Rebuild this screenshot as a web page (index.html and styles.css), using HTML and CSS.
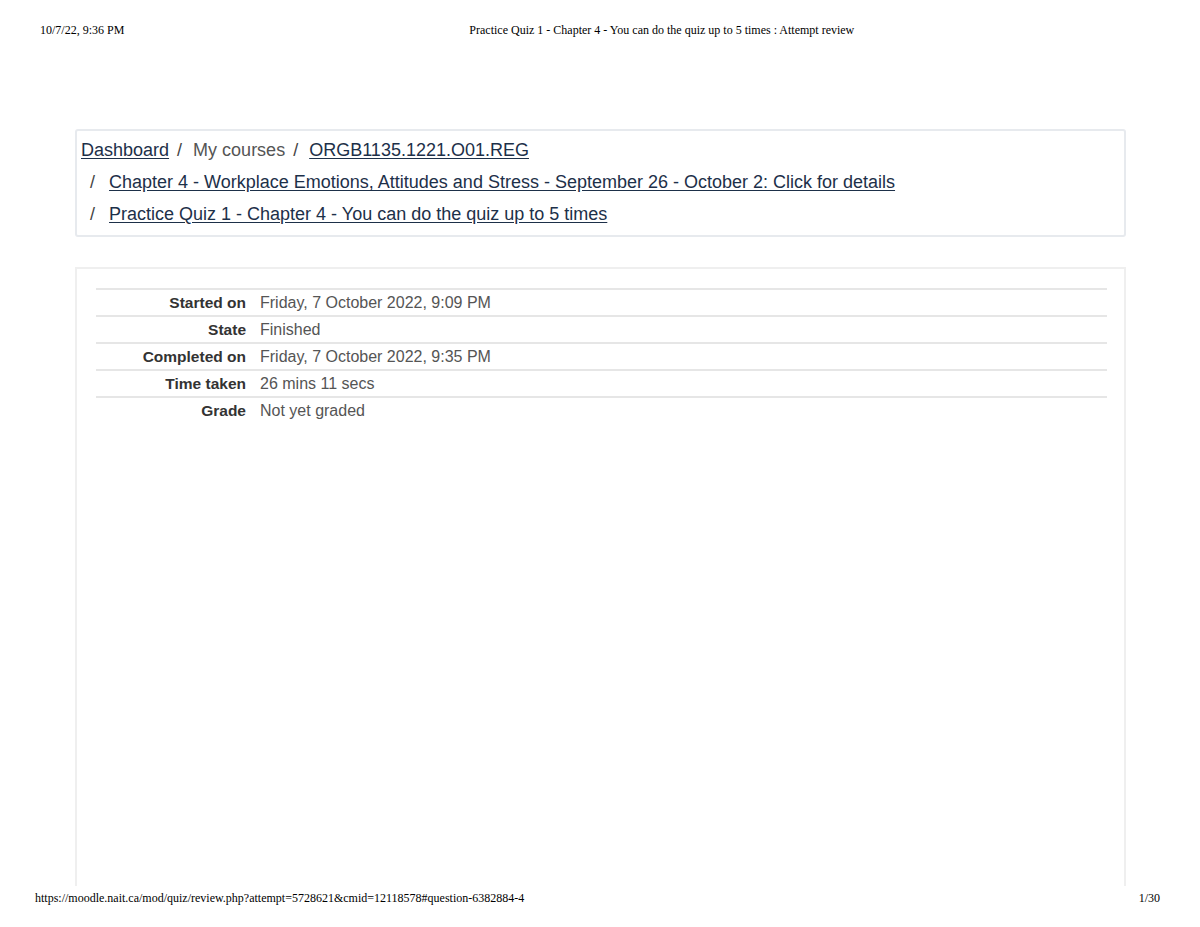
FILE: index.html
```html
<!DOCTYPE html>
<html lang="en">
<head>
    <meta charset="UTF-8">
    <meta name="viewport" content="width=device-width, initial-scale=1.0">
    <title>Practice Quiz 1 - Chapter 4 - You can do the quiz up to 5 times : Attempt review</title>
    <link rel="stylesheet" href="styles.css">
</head>
<body>
    <div class="print-header">
        <span class="print-date">10/7/22, 9:36 PM</span>
        <span class="print-title">Practice Quiz 1 - Chapter 4 - You can do the quiz up to 5 times : Attempt review</span>
    </div>

    <div class="page-body">
        <nav class="breadcrumb">
            <div class="crumb-line">
                <a href="#">Dashboard</a>
                <span class="sep">/</span>
                <span class="crumb-text">My courses</span>
                <span class="sep">/</span>
                <a href="#">ORGB1135.1221.O01.REG</a>
            </div>
            <div class="crumb-line indent">
                <span class="sep">/</span>
                <a href="#">Chapter 4 - Workplace Emotions, Attitudes and Stress - September 26 - October 2: Click for details</a>
            </div>
            <div class="crumb-line indent">
                <span class="sep">/</span>
                <a href="#">Practice Quiz 1 - Chapter 4 - You can do the quiz up to 5 times</a>
            </div>
        </nav>

        <div class="main-card">
            <table class="summary">
                <tr>
                    <th>Started on</th>
                    <td>Friday, 7 October 2022, 9:09 PM</td>
                </tr>
                <tr>
                    <th>State</th>
                    <td>Finished</td>
                </tr>
                <tr>
                    <th>Completed on</th>
                    <td>Friday, 7 October 2022, 9:35 PM</td>
                </tr>
                <tr>
                    <th>Time taken</th>
                    <td>26 mins 11 secs</td>
                </tr>
                <tr>
                    <th>Grade</th>
                    <td>Not yet graded</td>
                </tr>
            </table>
        </div>
    </div>

    <div class="print-footer">
        <span class="print-url">https://moodle.nait.ca/mod/quiz/review.php?attempt=5728621&amp;cmid=12118578#question-6382884-4</span>
        <span class="print-page">1/30</span>
    </div>
</body>
</html>
```

FILE: styles.css
```css
html, body {
    margin: 0;
    padding: 0;
    background: #fff;
}
body {
    width: 1200px;
    height: 927px;
    overflow: hidden;
    font-family: "Liberation Sans", Arial, sans-serif;
}
.print-header,
.print-footer {
    font-family: "Liberation Serif", "Times New Roman", serif;
    font-size: 12px;
    color: #000;
    display: flex;
    align-items: center;
}
.print-header {
    height: 60px;
    padding-left: 40px;
}
.print-title {
    margin-left: 345px;
}
.page-body {
    height: 826px;
    overflow: hidden;
    padding: 0 74px 0 75px;
}
.breadcrumb {
    margin-top: 69px;
    border: 2px solid #e7eaee;
    border-radius: 3px;
    padding: 3px 4px 5px 4px;
    font-size: 18px;
}
.crumb-line {
    height: 32px;
    line-height: 32px;
    white-space: nowrap;
}
.crumb-line.indent {
    padding-left: 9px;
}
.breadcrumb a {
    color: #1d3049;
    text-decoration: underline;
    text-underline-offset: 2px;
}
.crumb-text {
    color: #555;
}
.sep {
    color: #444;
    margin: 0 6px 0 3px;
}
.crumb-line.indent .sep {
    margin-left: 0;
    margin-right: 9px;
}
.main-card {
    margin-top: 30px;
    height: 800px;
    border: 2px solid #efefef;
    border-bottom: none;
    padding: 19px 17px 0 19px;
}
.summary {
    width: 100%;
    border-collapse: collapse;
}
.summary tr {
    border-top: 2px solid #e6e6e6;
}
.summary th {
    width: 150px;
    text-align: right;
    font-size: 15.5px;
    font-weight: bold;
    color: #333;
    padding: 0 14px 0 0;
    height: 25px;
    white-space: nowrap;
}
.summary td {
    font-size: 16px;
    color: #555;
    padding: 0;
}
.print-footer {
    height: 24px;
    padding-left: 35px;
}
.print-page {
    margin-left: auto;
    margin-right: 40px;
}
```
